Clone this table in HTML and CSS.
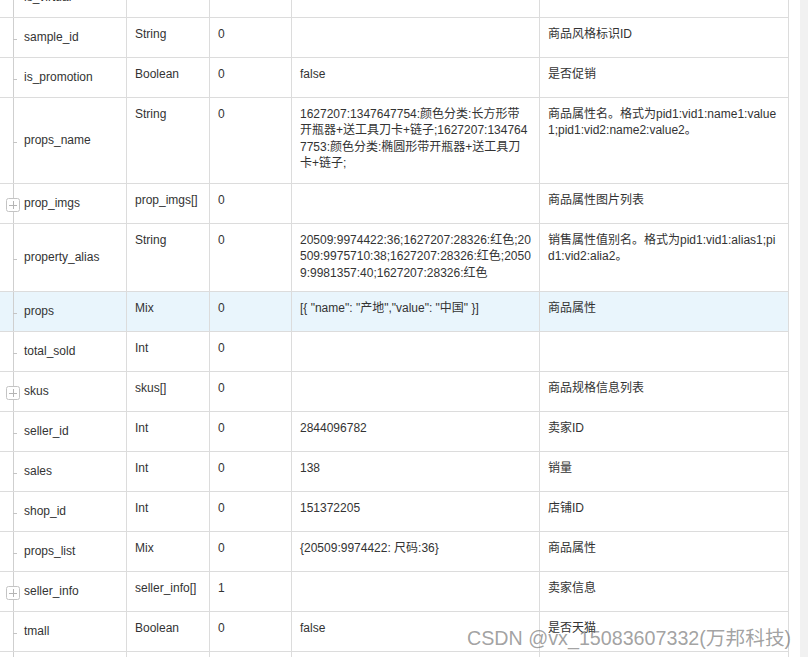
FILE: index.html
```html
<!DOCTYPE html>
<html lang="zh-CN">
<head>
<meta charset="utf-8">
<title>API fields</title>
<link rel="stylesheet" href="styles.css">
</head>
<body>
<div class="page">
  <div class="table-wrap">
    <table class="field-table">
      <colgroup>
        <col class="c-name"><col class="c-type"><col class="c-req"><col class="c-example"><col class="c-desc">
      </colgroup>
      <tbody>
        <tr>
          <td class="name-cell"><div class="node"><span class="tick"></span>is_virtual</div></td>
          <td>Boolean</td><td>0</td><td class="example">false</td><td class="desc">是否虚拟商品</td>
        </tr>
        <tr>
          <td class="name-cell"><div class="node"><span class="tick"></span>sample_id</div></td>
          <td>String</td><td>0</td><td class="example"></td><td class="desc">商品风格标识ID</td>
        </tr>
        <tr>
          <td class="name-cell"><div class="node"><span class="tick"></span>is_promotion</div></td>
          <td>Boolean</td><td>0</td><td class="example">false</td><td class="desc">是否促销</td>
        </tr>
        <tr class="row-tall4">
          <td class="name-cell"><div class="node"><span class="tick"></span>props_name</div></td>
          <td>String</td><td>0</td><td class="example">1627207:1347647754:颜色分类:长方形带开瓶器+送工具刀卡+链子;1627207:1347647753:颜色分类:椭圆形带开瓶器+送工具刀卡+链子;</td><td class="desc">商品属性名。格式为pid1:vid1:name1:value1;pid1:vid2:name2:value2。</td>
        </tr>
        <tr>
          <td class="name-cell"><div class="node"><span class="expander"><svg width="14" height="14" viewBox="0 0 14 14"><rect x="0.5" y="0.5" width="13" height="13" rx="2" fill="#fff" stroke="#c4c4c4"/><path d="M3 7.5h8M7.5 3v8" stroke="#b4b4b4" fill="none"/></svg></span>prop_imgs</div></td>
          <td>prop_imgs[]</td><td>0</td><td class="example"></td><td class="desc">商品属性图片列表</td>
        </tr>
        <tr class="row-tall3">
          <td class="name-cell"><div class="node"><span class="tick"></span>property_alias</div></td>
          <td>String</td><td>0</td><td class="example">20509:9974422:36;1627207:28326:红色;20509:9975710:38;1627207:28326:红色;20509:9981357:40;1627207:28326:红色</td><td class="desc">销售属性值别名。格式为pid1:vid1:alias1;pid1:vid2:alia2。</td>
        </tr>
        <tr class="is-hover">
          <td class="name-cell"><div class="node"><span class="tick"></span>props</div></td>
          <td>Mix</td><td>0</td><td class="example">[{ "name": "产地","value": "中国" }]</td><td class="desc">商品属性</td>
        </tr>
        <tr>
          <td class="name-cell"><div class="node"><span class="tick"></span>total_sold</div></td>
          <td>Int</td><td>0</td><td class="example"></td><td class="desc"></td>
        </tr>
        <tr>
          <td class="name-cell"><div class="node"><span class="expander"><svg width="14" height="14" viewBox="0 0 14 14"><rect x="0.5" y="0.5" width="13" height="13" rx="2" fill="#fff" stroke="#c4c4c4"/><path d="M3 7.5h8M7.5 3v8" stroke="#b4b4b4" fill="none"/></svg></span>skus</div></td>
          <td>skus[]</td><td>0</td><td class="example"></td><td class="desc">商品规格信息列表</td>
        </tr>
        <tr>
          <td class="name-cell"><div class="node"><span class="tick"></span>seller_id</div></td>
          <td>Int</td><td>0</td><td class="example">2844096782</td><td class="desc">卖家ID</td>
        </tr>
        <tr>
          <td class="name-cell"><div class="node"><span class="tick"></span>sales</div></td>
          <td>Int</td><td>0</td><td class="example">138</td><td class="desc">销量</td>
        </tr>
        <tr>
          <td class="name-cell"><div class="node"><span class="tick"></span>shop_id</div></td>
          <td>Int</td><td>0</td><td class="example">151372205</td><td class="desc">店铺ID</td>
        </tr>
        <tr>
          <td class="name-cell"><div class="node"><span class="tick"></span>props_list</div></td>
          <td>Mix</td><td>0</td><td class="example">{20509:9974422: 尺码:36}</td><td class="desc">商品属性</td>
        </tr>
        <tr>
          <td class="name-cell"><div class="node"><span class="expander"><svg width="14" height="14" viewBox="0 0 14 14"><rect x="0.5" y="0.5" width="13" height="13" rx="2" fill="#fff" stroke="#c4c4c4"/><path d="M3 7.5h8M7.5 3v8" stroke="#b4b4b4" fill="none"/></svg></span>seller_info</div></td>
          <td>seller_info[]</td><td>1</td><td class="example"></td><td class="desc">卖家信息</td>
        </tr>
        <tr>
          <td class="name-cell"><div class="node"><span class="tick"></span>tmall</div></td>
          <td>Boolean</td><td>0</td><td class="example">false</td><td class="desc">是否天猫</td>
        </tr>
        <tr>
          <td class="name-cell"><div class="node"><span class="tick"></span>is_tmall</div></td>
          <td>Boolean</td><td>0</td><td class="example">false</td><td class="desc">是否天猫店铺</td>
        </tr>
      </tbody>
    </table>
  </div>
  <div class="scroll-track"></div>
  <div class="watermark">CSDN @vx_15083607332(万邦科技)</div>
</div>
</body>
</html>
```

FILE: styles.css
```css
html, body {
  margin: 0;
  padding: 0;
  background: #fff;
}

.page {
  position: relative;
  display: flex;
  width: 808px;
  height: 657px;
  overflow: hidden;
  font-family: "Liberation Sans", "Noto Sans CJK SC", sans-serif;
  font-size: 12px;
  line-height: 16.5px;
  color: #333;
}

.table-wrap {
  flex: 0 0 789px;
  margin-top: -22px;
}

.field-table {
  table-layout: fixed;
  width: 789px;
  border-collapse: separate;
  border-spacing: 0;
}

.c-name { width: 127px; }
.c-type { width: 83px; }
.c-req { width: 82px; }
.c-example { width: 248px; }
.c-desc { width: 249px; }

.field-table tr {
  height: 40px;
}

.field-table tr.row-tall4 { height: 86px; }
.field-table tr.row-tall3 { height: 68px; }

.field-table td {
  border-right: 1px solid #dcdcdc;
  border-bottom: 1px solid #dcdcdc;
  padding: 7.5px 8px 8px 8px;
  vertical-align: top;
  word-break: break-all;
  white-space: normal;
}

.field-table td.example {
  padding-right: 7.9px;
}

.field-table td.desc {
  padding-right: 9px;
}

.field-table td.name-cell {
  padding: 0 4px 0 0;
  vertical-align: middle;
  background-image: linear-gradient(#cfcfcf, #cfcfcf);
  background-repeat: no-repeat;
  background-position: 13px 0;
  background-size: 1px 100%;
  word-break: normal;
  white-space: nowrap;
}

.field-table tr.is-hover td {
  background-color: #e9f5fc;
}

.node {
  display: flex;
  align-items: center;
}

.tick {
  flex: 0 0 auto;
  width: 4px;
  height: 1px;
  margin: 3px 7px 0 13px;
  background: #c4c4c4;
}

.expander {
  flex: 0 0 auto;
  display: block;
  width: 14px;
  height: 14px;
  margin: 2px 4px 0 6px;
}

.expander svg {
  display: block;
}

.scroll-track {
  flex: 0 0 8px;
  margin-left: 11px;
  background: #f1f1f1;
}

.watermark {
  position: absolute;
  left: 467px;
  top: 628px;
  font-size: 19.7px;
  line-height: 20px;
  white-space: nowrap;
  color: rgba(110, 110, 110, 0.65);
}
```
